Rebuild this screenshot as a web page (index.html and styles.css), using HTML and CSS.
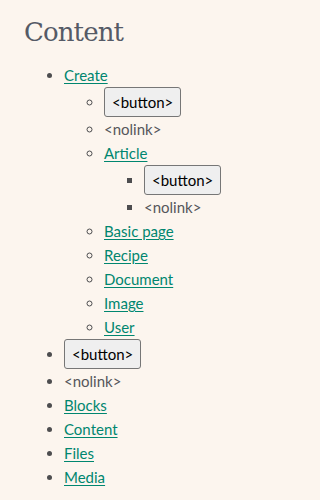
FILE: index.html
```html
<!DOCTYPE html>
<html lang="en">
<head>
<meta charset="utf-8">
<title>Content</title>
<link rel="stylesheet" href="styles.css">
</head>
<body>
<div class="page">
  <h1 class="title">Content</h1>
  <ul class="menu level1">
    <li><a href="#">Create</a>
      <ul class="menu level2">
        <li><button type="button" class="btn">&lt;button&gt;</button></li>
        <li><span class="nolink">&lt;nolink&gt;</span></li>
        <li><a href="#">Article</a>
          <ul class="menu level3">
            <li><button type="button" class="btn">&lt;button&gt;</button></li>
            <li><span class="nolink">&lt;nolink&gt;</span></li>
          </ul>
        </li>
        <li><a href="#">Basic page</a></li>
        <li><a href="#">Recipe</a></li>
        <li><a href="#">Document</a></li>
        <li><a href="#">Image</a></li>
        <li><a href="#">User</a></li>
      </ul>
    </li>
    <li><button type="button" class="btn">&lt;button&gt;</button></li>
    <li><span class="nolink">&lt;nolink&gt;</span></li>
    <li><a href="#">Blocks</a></li>
    <li><a href="#">Content</a></li>
    <li><a href="#">Files</a></li>
    <li><a href="#">Media</a></li>
  </ul>
</div>
</body>
</html>
```
FILE: styles.css
```css
html, body {
  margin: 0;
  padding: 0;
  background: #fcf5ee;
}
body {
  font-family: Lato, "Noto Sans", sans-serif;
  font-size: 15px;
  color: #55565b;
}
.page {
  padding: 0 24px 0 24px;
}
.title {
  margin: 0;
  padding-top: 15px;
  height: 48px;
  font-family: "DejaVu Serif", serif;
  font-weight: 300;
  font-size: 26px;
  line-height: 34px;
  letter-spacing: -0.9px;
  color: #555a66;
}
.menu {
  margin: 0;
  padding-left: 40px;
}
.level1 { list-style-type: disc; }
.level2 { list-style-type: circle; }
.level3 { list-style-type: square; }
.menu li {
  line-height: 24px;
}
.menu li::marker {
  color: #4d4d4f;
}
.menu a {
  color: #00866f;
  text-decoration: underline;
  text-underline-offset: 2px;
}
.nolink {
  color: #55565b;
}
.btn {
  font-family: Lato, "Noto Sans", sans-serif;
  font-size: 15px;
  line-height: 20px;
  color: #000;
  background: #efefef;
  border: 1px solid #767676;
  border-radius: 3px;
  padding: 4px 7px;
  margin: 0;
  height: 30px;
  vertical-align: baseline;
}
```
